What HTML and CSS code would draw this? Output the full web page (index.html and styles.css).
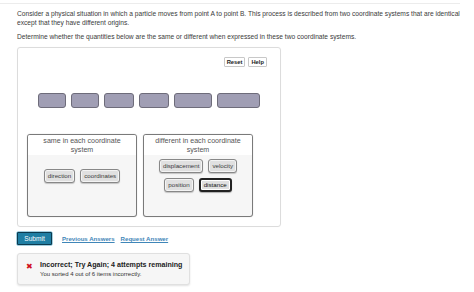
FILE: index.html
```html
<!DOCTYPE html>
<html>
<head>
<meta charset="utf-8">
<link rel="stylesheet" href="styles.css">
</head>
<body>
<div class="topline"></div>
<div class="content">
  <p class="intro">Consider a physical situation in which a particle moves from point A to point B. This process is described from two coordinate systems that are identical except that they have different origins.</p>
  <p class="intro q">Determine whether the quantities below are the same or different when expressed in these two coordinate systems.</p>

  <div class="panel">
    <div class="tools">
      <button class="tool">Reset</button>
      <button class="tool">Help</button>
    </div>
    <div class="slots">
      <span class="slot w27"></span>
      <span class="slot w28"></span>
      <span class="slot w29"></span>
      <span class="slot w30"></span>
      <span class="slot w38"></span>
      <span class="slot w42"></span>
    </div>
    <div class="bins">
      <div class="bin">
        <div class="bin-title">same in each coordinate system</div>
        <div class="bin-body">
          <div class="chip-row">
            <span class="chip">direction</span>
            <span class="chip">coordinates</span>
          </div>
        </div>
      </div>
      <div class="bin">
        <div class="bin-title">different in each coordinate system</div>
        <div class="bin-body">
          <div class="chip-row">
            <span class="chip">displacement</span>
            <span class="chip">velocity</span>
          </div>
          <div class="chip-row">
            <span class="chip">position</span>
            <span class="chip focus">distance</span>
          </div>
        </div>
      </div>
    </div>
  </div>

  <div class="actions">
    <button class="submit">Submit</button>
    <a class="link" href="#">Previous Answers</a>
    <a class="link" href="#">Request Answer</a>
  </div>

  <div class="feedback">
    <span class="xmark">&#10006;</span>
    <div class="fb-text">
      <div class="fb-title">Incorrect; Try Again; 4 attempts remaining</div>
      <div class="fb-sub">You sorted 4 out of 6 items incorrectly.</div>
    </div>
  </div>
</div>
</body>
</html>
```

FILE: styles.css
```css
html, body {
  margin: 0;
  padding: 0;
  background: #fff;
}
body {
  font-family: "Liberation Sans", Arial, sans-serif;
  color: #333;
  width: 474px;
  height: 292px;
  overflow: hidden;
}
.topline {
  margin-top: 3px;
  width: 460px;
  height: 0;
  border-top: 1px solid #ececec;
}
.content {
  padding-left: 17px;
}
.intro {
  margin: 5px 0 0 0;
  font-size: 6.65px;
  line-height: 9px;
  color: #3a3a3a;
  width: 448px;
}
.intro.q {
  margin-top: 5px;
}
.panel {
  margin-top: 6px;
  width: 262px;
  height: 178px;
  border: 1px solid #dcdcdc;
  border-radius: 3px;
  box-shadow: 0 0 1px rgba(0,0,0,0.06);
  box-sizing: content-box;
}
.tools {
  display: flex;
  justify-content: flex-end;
  gap: 3px;
  padding: 9px 13px 0 0;
}
.tool {
  font-family: "Liberation Sans", Arial, sans-serif;
  font-weight: bold;
  font-size: 5.8px;
  height: 10px;
  padding: 0 2px;
  background: #fff;
  color: #222;
  border: 1px solid #c8c8c8;
  border-radius: 1px;
  line-height: 8px;
}
.slots {
  display: flex;
  gap: 5px;
  margin: 26px 0 0 20px;
}
.slot {
  display: block;
  height: 15px;
  box-sizing: border-box;
  background: #a09eb4;
  border: 1px solid #6e6c7a;
  border-radius: 3px;
}
.w27 { width: 28px; }
.w28 { width: 28px; }
.w29 { width: 30px; }
.w30 { width: 30px; }
.w38 { width: 38px; }
.w42 { width: 43px; }
.bins {
  display: flex;
  gap: 6px;
  margin: 26px 0 0 9px;
}
.bin {
  width: 110px;
  height: 83px;
  box-sizing: border-box;
  border: 1px solid #7a7a7a;
  border-radius: 3px;
  background: #f6f6f6;
  box-shadow: 0 0 1px rgba(0,0,0,0.3);
  display: flex;
  flex-direction: column;
  overflow: hidden;
}
.bin-title {
  background: #fff;
  text-align: center;
  font-size: 7.1px;
  line-height: 9px;
  color: #555;
  padding: 2px 8px 2px;
  height: 16px;
}
.bin-body {
  height: 41px;
  display: flex;
  flex-direction: column;
  justify-content: center;
  align-items: center;
  gap: 5px;
}
.chip-row {
  display: flex;
  gap: 5px;
  justify-content: center;
}
.chip {
  display: block;
  height: 14px;
  box-sizing: border-box;
  padding: 0 3px;
  font-size: 6.2px;
  line-height: 11px;
  color: #3a3a3a;
  background: #e0e0e0;
  border: 1.5px solid #888;
  border-radius: 3px;
  box-shadow: inset 0 0 0 1px #f4f4f4, 0 1px 1px rgba(0,0,0,0.2);
}
.chip.focus {
  color: #111;
  border: 2px solid #222;
  box-shadow: inset 0 0 0 1px #fff, 0 1px 1px rgba(0,0,0,0.3);
  line-height: 10px;
}
.actions {
  display: flex;
  align-items: center;
  gap: 6px;
  margin-top: 5px;
}
.submit {
  width: 35px;
  height: 13px;
  padding: 0;
  font-family: "Liberation Sans", Arial, sans-serif;
  font-size: 6.6px;
  color: #fff;
  background: #1f7ea3;
  border: 1px solid #0d3a4e;
  border-radius: 1px;
  box-shadow: 0 0 0 0.5px #4aa0c0;
  margin-right: 4px;
}
.link {
  font-size: 6.1px;
  font-weight: bold;
  color: #3f86b8;
  text-decoration: underline;
  text-decoration-thickness: 0.5px;
}
.feedback {
  margin-top: 8px;
  width: 173px;
  height: 32px;
  box-sizing: border-box;
  background: #f6f6f6;
  border: 1px solid #e0e0e0;
  border-radius: 3px;
  box-shadow: 0 1px 2px rgba(0,0,0,0.12);
  display: flex;
  align-items: center;
  padding-left: 8px;
}
.xmark {
  color: #d1111b;
  font-family: "DejaVu Sans", sans-serif;
  font-size: 8px;
  font-weight: bold;
  width: 14px;
  margin-top: -5px;
}
.fb-title {
  font-weight: bold;
  font-size: 7.1px;
  color: #222;
  line-height: 9px;
}
.fb-sub {
  font-size: 6px;
  color: #333;
  line-height: 8px;
}
```
